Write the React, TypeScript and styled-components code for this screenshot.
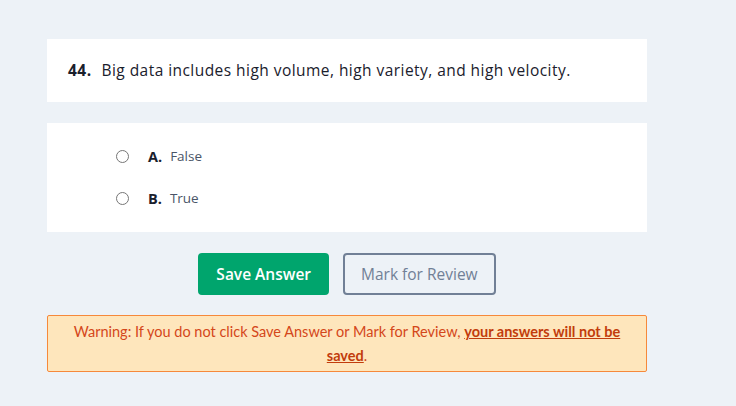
import React from "react";
import styled, { createGlobalStyle } from "styled-components";

const GlobalStyle = createGlobalStyle`
  html, body {
    margin: 0;
    padding: 0;
    background: #edf2f7;
  }
  body {
    font-family: "Open Sans", Lato, sans-serif;
  }
`;

const Page = styled.div`
  width: 736px;
  height: 406px;
  box-sizing: border-box;
  padding: 39px 0 0 47px;
`;

const Column = styled.div`
  width: 600px;
  display: flex;
  flex-direction: column;
  gap: 21px;
`;

const QuestionCard = styled.div`
  background: #ffffff;
  padding: 0 21px 2px;
  height: 63px;
  box-sizing: border-box;
  display: flex;
  align-items: center;
  font-size: 15.5px;
  letter-spacing: 0.45px;
  color: #1a202c;
`;

const Number = styled.span`
  font-weight: 700;
  margin-right: 10px;
`;

const OptionsCard = styled.div`
  background: #ffffff;
  height: 109px;
  box-sizing: border-box;
  padding: 22px 0 0 69px;
  display: flex;
  flex-direction: column;
  gap: 20px;
`;

const Option = styled.label`
  display: flex;
  align-items: center;
  height: 22px;
  font-size: 13.5px;
  color: #4a5568;
`;

const Radio = styled.span`
  width: 11px;
  height: 11px;
  border: 1px solid #767676;
  border-radius: 50%;
  margin-right: 19px;
  background: #fff;
  flex-shrink: 0;
`;

const Letter = styled.span`
  font-weight: 700;
  font-size: 14.5px;
  color: #1a202c;
  margin-right: 8px;
`;

const Actions = styled.div`
  display: flex;
  justify-content: center;
  gap: 14px;
`;

const Button = styled.button<{ $primary?: boolean }>`
  height: 42px;
  box-sizing: border-box;
  border-radius: 4px;
  font-family: "Open Sans", Lato, sans-serif;
  font-size: 15.5px;
  padding: 0 16px;
  cursor: pointer;
  border: 2px solid ${(p) => (p.$primary ? "#00a56d" : "#718096")};
  background: ${(p) => (p.$primary ? "#00a56d" : "transparent")};
  color: ${(p) => (p.$primary ? "#ffffff" : "#718096")};
  font-weight: ${(p) => (p.$primary ? 600 : 400)};
`;

const Warning = styled.div`
  margin-top: -1px;
  background: #fee6bc;
  border: 1px solid #f6893b;
  border-radius: 2px;
  padding: 4px 21px 3px;
  text-align: center;
  font-family: Lato, "Open Sans", sans-serif;
  font-size: 14.5px;
  line-height: 24px;
  color: #d4471a;
`;

const Strong = styled.a`
  font-weight: 700;
  color: #c23c0c;
  text-decoration: underline;
`;

export default function App() {
  return (
    <>
      <GlobalStyle />
      <Page>
        <Column>
          <QuestionCard>
            <Number>44.</Number>
            Big data includes high volume, high variety, and high velocity.
          </QuestionCard>
          <OptionsCard>
            <Option>
              <Radio />
              <Letter>A.</Letter>
              False
            </Option>
            <Option>
              <Radio />
              <Letter>B.</Letter>
              True
            </Option>
          </OptionsCard>
          <Actions>
            <Button $primary>Save Answer</Button>
            <Button>Mark for Review</Button>
          </Actions>
          <Warning>
            Warning: If you do not click Save Answer or Mark for Review,{" "}
            <Strong>your answers will not be saved</Strong>.
          </Warning>
        </Column>
      </Page>
    </>
  );
}
